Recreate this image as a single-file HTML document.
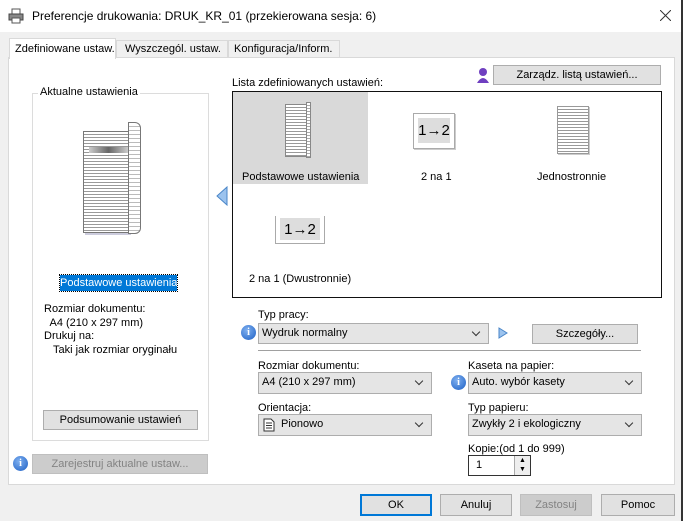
<!DOCTYPE html><html><head><style>
*{box-sizing:border-box;margin:0;padding:0}
body{width:683px;height:521px;background:#f0f0f0;font-family:"Liberation Sans",sans-serif;font-size:11px;color:#000;position:relative;overflow:hidden}
.a{position:absolute;white-space:nowrap}
.btn{position:absolute;white-space:nowrap;background:#e1e1e1;border:1px solid #adadad;text-align:center;line-height:18px}
.cb{position:absolute;white-space:nowrap;background:#e5e5e5;border:1px solid #adadad;line-height:19px;padding-left:3px}
.cb:after{content:"";position:absolute;right:9px;top:5px;width:5px;height:5px;border-right:1px solid #333;border-bottom:1px solid #333;transform:rotate(45deg)}
.info{position:absolute;width:15px;height:15px;border-radius:50%;background:radial-gradient(circle at 40% 35%,#7fb0f0,#1c5fc4);color:#fff;font:bold 10px "Liberation Serif",serif;text-align:center;line-height:15px}
.lines{background:repeating-linear-gradient(#fff 0 2px,#999 2px 3px)}
</style></head><body>
<div class="a" style="left:0;top:0;width:683px;height:32px;background:#fff"></div>
<svg class="a" style="left:8px;top:8px" width="16" height="16"><rect x="4" y="1" width="8" height="5" fill="#fff" stroke="#555"/><rect x="1" y="6" width="14" height="6" fill="#888" stroke="#444"/><rect x="4" y="10" width="8" height="5" fill="#fff" stroke="#555"/></svg>
<div class="a" style="left:32px;top:9px;font-size:12px">Preferencje drukowania: DRUK_KR_01 (przekierowana sesja: 6)</div>
<svg class="a" style="left:660px;top:10px" width="11" height="11"><path d="M0 0L11 11M11 0L0 11" stroke="#333" stroke-width="1"/></svg>
<div class="a" style="left:681px;top:0;width:2px;height:521px;background:#333"></div>
<!-- tabs -->
<div class="a" style="left:8px;top:57px;width:667px;height:428px;background:#fff;border:1px solid #d9d9d9"></div>
<div class="a" style="left:9px;top:38px;width:107px;height:21px;background:#fff;border:1px solid #d9d9d9;border-bottom:none;padding:4px 0 0 5px">Zdefiniowane ustaw.</div>
<div class="a" style="left:116px;top:40px;width:112px;height:17px;background:#f0f0f0;border:1px solid #d9d9d9;border-bottom:none;padding:2px 0 0 8px">Wyszczegól. ustaw.</div>
<div class="a" style="left:228px;top:40px;width:112px;height:17px;background:#f0f0f0;border:1px solid #d9d9d9;border-bottom:none;padding:2px 0 0 5px">Konfiguracja/Inform.</div>
<!-- left group -->
<div class="a" style="left:32px;top:93px;width:177px;height:348px;border:1px solid #dcdcdc"></div>
<div class="a" style="left:38px;top:86px;background:#fff;padding:0 2px">Aktualne ustawienia</div>
<div class="a lines" style="left:83px;top:131px;width:46px;height:102px;border:1px solid #777;box-shadow:2px 2px 0 #ccd"></div>
<div class="a" style="left:89px;top:147px;width:39px;height:6px;background:linear-gradient(90deg,#ccc,#666,#ccc)"></div>
<div class="a" style="left:128px;top:122px;width:13px;height:112px;border:1px solid #777;border-radius:0 6px 6px 0;background:repeating-linear-gradient(#fff 0 3px,#bbb 3px 4px)"></div>
<div class="a" style="left:60px;top:275px;width:117px;height:16px;background:#0078d7;color:#fff;line-height:16px;text-align:center;outline:1px dotted #000">Podstawowe ustawienia</div>
<div class="a" style="left:44px;top:303px;line-height:13.5px">Rozmiar dokumentu:<br>&nbsp; A4 (210 x 297 mm)<br>Drukuj na:<br>&nbsp;&nbsp; Taki jak rozmiar oryginału</div>
<div class="btn" style="left:43px;top:410px;width:155px;height:20px">Podsumowanie ustawień</div>
<div class="info" style="left:13px;top:456px">i</div>
<div class="btn" style="left:32px;top:454px;width:176px;height:20px;background:#ccc;border-color:#bfbfbf;color:#838383">Zarejestruj aktualne ustaw...</div>
<!-- arrow -->
<svg class="a" style="left:215px;top:186px" width="14" height="20"><path d="M12 1 L2 10 L12 19Z" fill="#9cc3ee" stroke="#4a86c8"/></svg>
<!-- list -->
<svg class="a" style="left:476px;top:67px" width="14" height="16"><circle cx="7" cy="5" r="4" fill="#6f3fc0"/><path d="M1 16 Q7 6 13 16Z" fill="#6f3fc0"/></svg>
<div class="btn" style="left:493px;top:65px;width:168px;height:20px">Zarządz. listą ustawień...</div>
<div class="a" style="left:232px;top:77px">Lista zdefiniowanych ustawień:</div>
<div class="a" style="left:232px;top:91px;width:430px;height:207px;border:1px solid #111"></div>
<div class="a" style="left:233px;top:92px;width:135px;height:92px;background:#d9d9d9"></div>
<div class="a lines" style="left:285px;top:104px;width:22px;height:53px;border:1px solid #888"></div>
<div class="a" style="left:306px;top:102px;width:5px;height:56px;border:1px solid #888;background:repeating-linear-gradient(#fff 0 2px,#aaa 2px 3px)"></div>
<div class="a" style="left:242px;top:171px">Podstawowe ustawienia</div>
<div class="a" style="left:413px;top:113px;width:42px;height:36px;background:#fff;border:1px solid #aaa;box-shadow:1px 1px 0 #ccc"></div>
<div class="a" style="left:418px;top:118px;width:32px;height:25px;background:#ddd;font-size:15px;text-align:center;line-height:25px">1→2</div>
<div class="a" style="left:421px;top:171px">2 na 1</div>
<div class="a lines" style="left:557px;top:106px;width:32px;height:48px;border:1px solid #999;box-shadow:1px 1px 0 #ccc"></div>
<div class="a" style="left:537px;top:171px">Jednostronnie</div>
<div class="a" style="left:275px;top:216px;width:50px;height:28px;border:1px solid #aaa;border-top:none;background:#fff"></div>
<div class="a" style="left:280px;top:218px;width:40px;height:22px;background:#ddd;font-size:15px;text-align:center;line-height:24px">1→2</div>
<div class="a" style="left:249px;top:273px">2 na 1 (Dwustronnie)</div>
<!-- settings -->
<div class="a" style="left:258px;top:309px">Typ pracy:</div>
<div class="info" style="left:241px;top:325px">i</div>
<div class="cb" style="left:258px;top:323px;width:231px;height:21px">Wydruk normalny</div>
<svg class="a" style="left:497px;top:327px" width="12" height="12"><path d="M2 1 L10 6 L2 11Z" fill="#9cc3ee" stroke="#4a86c8"/></svg>
<div class="btn" style="left:532px;top:324px;width:106px;height:20px">Szczegóły...</div>
<div class="a" style="left:258px;top:350px;width:383px;height:1px;background:#a0a0a0"></div>
<div class="a" style="left:258px;top:360px">Rozmiar dokumentu:</div>
<div class="cb" style="left:258px;top:372px;width:174px;height:22px">A4 (210 x 297 mm)</div>
<div class="a" style="left:468px;top:360px">Kaseta na papier:</div>
<div class="info" style="left:451px;top:375px">i</div>
<div class="cb" style="left:468px;top:372px;width:174px;height:22px">Auto. wybór kasety</div>
<div class="a" style="left:258px;top:402px">Orientacja:</div>
<div class="cb" style="left:258px;top:414px;width:174px;height:22px;padding-left:22px">Pionowo</div>
<svg class="a" style="left:263px;top:418px" width="12" height="14"><path d="M1 1 H8 L11 4 V13 H1Z M3 5 H9 M3 7.5 H9 M3 10 H9" fill="#fff" stroke="#333"/></svg>
<div class="a" style="left:468px;top:402px">Typ papieru:</div>
<div class="cb" style="left:468px;top:414px;width:174px;height:22px">Zwykły 2 i ekologiczny</div>
<div class="a" style="left:468px;top:443px">Kopie:(od 1 do 999)</div>
<div class="a" style="left:468px;top:455px;width:63px;height:21px;border:1px solid #333;background:#fff;padding:3px 0 0 7px">1</div>
<div class="a" style="left:514px;top:456px;width:16px;height:19px;border-left:1px solid #aaa;background:#eee;font-size:7px;line-height:9px;text-align:center">▲<br>▼</div>
<!-- bottom -->
<div class="btn" style="left:360px;top:494px;width:72px;height:22px;border:2px solid #0078d7;line-height:18px">OK</div>
<div class="btn" style="left:440px;top:494px;width:72px;height:22px;line-height:20px">Anuluj</div>
<div class="btn" style="left:520px;top:494px;width:72px;height:22px;line-height:20px;background:#ccc;border-color:#bfbfbf;color:#838383">Zastosuj</div>
<div class="btn" style="left:601px;top:494px;width:74px;height:22px;line-height:20px">Pomoc</div>
</body></html>
